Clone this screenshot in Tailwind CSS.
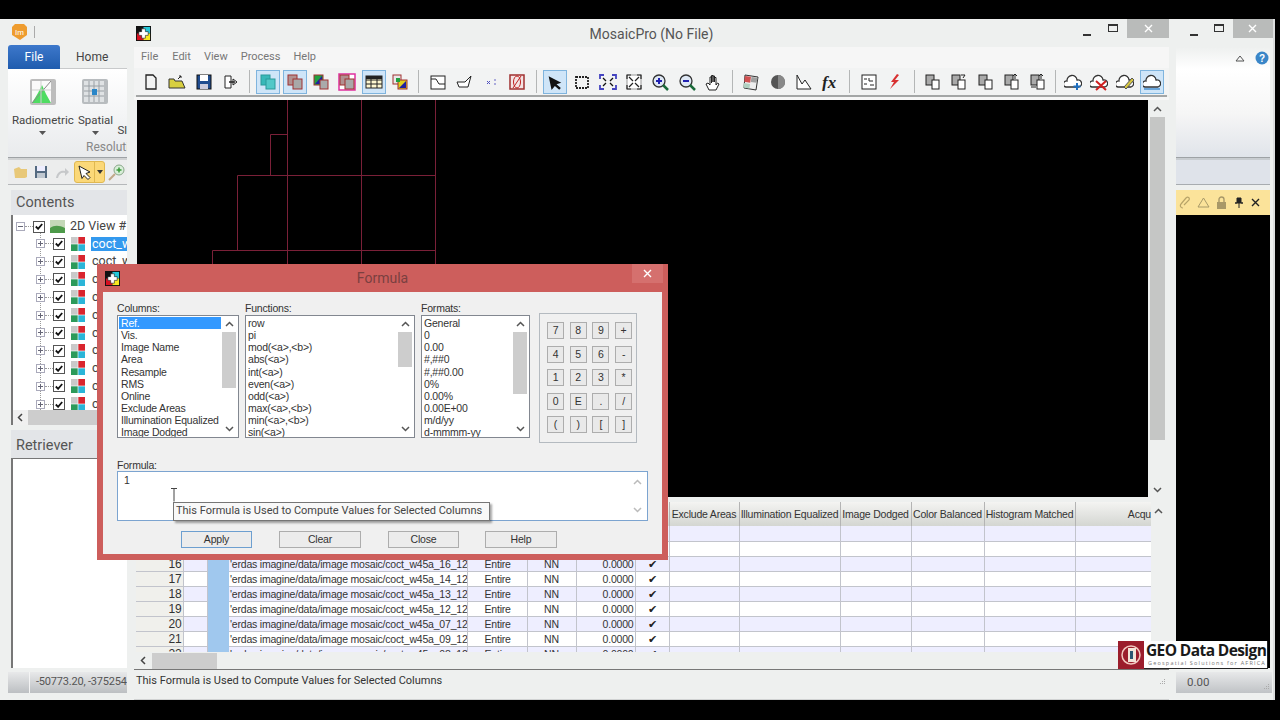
<!DOCTYPE html>
<html lang="en">
<head>
  <meta charset="UTF-8" />
  <title>MosaicPro (No File)</title>
  <script src="https://cdn.jsdelivr.net/npm/@tailwindcss/browser@4"></script>
</head>
<body class="bg-black">
<div class="relative w-[1280px] h-[720px] bg-black overflow-hidden text-[#333] font-['Roboto',sans-serif]">

  <!-- Left app window (IMAGINE main) -->
  <section class="absolute left-0 top-[19px] w-[134px] h-[681px] bg-[#eef0ef] pl-[8px]">
    <div class="w-[119px] h-full flex flex-col overflow-hidden">
      <div class="h-[26px] shrink-0 flex items-center pl-[4px] gap-[7px]">
        <svg class="w-[15px] h-[16px]" viewBox="0 0 15 16"><path d="M3 0h9l3 3v8l-7 5-8-5V3z" fill="#ee9c2f"/><text x="7.5" y="10.5" font-size="8" fill="#fff" text-anchor="middle" font-family="Liberation Sans">Im</text></svg>
        <div class="w-px h-[12px] bg-[#aaa]"></div>
      </div>
      <div class="h-[24px] shrink-0 flex border-b border-[#c8cacb]">
        <div class="w-[52px] h-[24px] rounded-t-[3px] bg-gradient-to-b from-[#3d78cb] to-[#1f5cae] text-white text-[12px] flex items-center justify-center">File</div>
        <div class="flex-1 text-[12px] flex items-end pb-[2px] pl-[16px] text-[#444]">Home</div>
      </div>
      <div class="relative h-[88px] shrink-0 bg-gradient-to-b from-white to-[#e9ebed] flex">
        <div class="w-[70px] flex flex-col items-center pt-[9px]">
          <svg class="w-[28px] h-[28px]" viewBox="0 0 28 28"><rect x="1" y="1" width="26" height="26" rx="2" fill="#bdbdbd"/><rect x="3" y="3" width="19" height="22" fill="#fafafa"/><path d="M3 25 L9 15 L13 7 L17 16 L22 25Z" fill="#4fdc62"/><path d="M3 25L22 3" stroke="#888" fill="none"/><path d="M12 3v22M3 12h19" stroke="#cfcfcf" fill="none"/></svg>
          <span class="text-[11.500px] mt-[6px] leading-[16px] text-[#444]">Radiometric</span>
          <svg class="w-[7px] h-[4px] mt-[3px]" viewBox="0 0 7 4"><path d="M0 0h7L3.500 4z" fill="#555"/></svg>
        </div>
        <div class="w-[36px] flex flex-col items-center pt-[9px]">
          <svg class="w-[28px] h-[28px]" viewBox="0 0 28 28"><rect x="1" y="1" width="26" height="25" rx="2" fill="#b8bcbf"/><path d="M3 3h20v21H3z" fill="#dfe2e4"/><path d="M8 3v21M13 3v21M18 3v21M3 8h20M3 13h20M3 18h20" stroke="#9aa0a5" fill="none"/><rect x="11" y="11" width="5" height="6" fill="#2a86c8"/></svg>
          <span class="text-[11.500px] mt-[6px] leading-[16px] text-[#444]">Spatial</span>
          <svg class="w-[7px] h-[4px] mt-[3px]" viewBox="0 0 7 4"><path d="M0 0h7L3.500 4z" fill="#555"/></svg>
        </div>
        <span class="text-[11.500px] mt-[53px] ml-[4px] leading-[16px] text-[#444] whitespace-nowrap">Sl</span>
        <span class="absolute left-[78px] top-[70px] text-[12px] leading-[16px] text-[#888] whitespace-nowrap">Resolution</span>
      </div>
      <div class="h-[3px] shrink-0 bg-[#d0d2d3] border-t border-[#9ea2a5]"></div>
      <div class="h-[25px] shrink-0 flex items-center bg-[#eceded] border-b border-[#b5b8ba] pl-[5px]">
        <svg class="w-[15px] h-[15px]" viewBox="0 0 15 15"><path d="M1 4l5-2 2 2h6v8l-2 1H2z" fill="#e8c878"/></svg>
        <svg class="w-[14px] h-[14px] ml-[6px]" viewBox="0 0 14 14"><path d="M1 1h12v12H1z" fill="#546a80"/><rect x="3" y="1" width="8" height="5" fill="#eef"/><rect x="3" y="8" width="8" height="5" fill="#c0c8d0"/></svg>
        <svg class="w-[15px] h-[13px] ml-[7px]" viewBox="0 0 15 13"><path d="M1 12C2 6 6 4 10 5V2l4 4-4 4V7C6 6 4 8 3 12z" fill="#c6c8ca"/></svg>
        <div class="w-[31px] h-[22px] ml-[4px] rounded-[3px] border border-[#e0b850] bg-[#fbd878] flex">
          <div class="w-[20px] flex items-center justify-center border-r border-[#e0b850]">
            <svg class="w-[14px] h-[15px]" viewBox="0 0 14 15"><path d="M1 1l11 6-4 1.500 4 4-2 2-4-4-2 3z" fill="#fff" stroke="#222"/></svg>
          </div>
          <div class="flex-1 flex items-center justify-center"><svg class="w-[6px] h-[4px]" viewBox="0 0 6 4"><path d="M0 0h6L3 4z" fill="#333"/></svg></div>
        </div>
        <svg class="w-[17px] h-[17px] ml-[3px]" viewBox="0 0 17 17"><circle cx="11" cy="6" r="5" fill="#d8eed8" stroke="#8aa88a"/><path d="M11 3.500v5M8.500 6h5" stroke="#3a9a3a" stroke-width="1.500"/><path d="M7 10L1 16" stroke="#c0a888" stroke-width="2"/></svg>
      </div>
      <div class="h-[5px] shrink-0"></div>
      <div class="ml-[3px] h-[25px] shrink-0 bg-[#e3e5e8] flex items-center pl-[5px] pt-[1px] text-[14.500px] text-[#555]">Contents</div>
      <div id="tree" class="ml-[3px] h-[195px] shrink-0 bg-white border-l-2 border-[#777] overflow-hidden pt-[3px] relative"></div>
      <div class="ml-[3px] h-[15px] shrink-0 bg-[#f0f0f0] flex items-center pl-[4px] border-l-2 border-[#777]">
        <svg class="w-[6px] h-[9px]" viewBox="0 0 6 9"><path d="M5 1L1.500 4.500 5 8" fill="none" stroke="#444" stroke-width="1.500"/></svg>
        <div class="ml-[5px] w-[80px] h-[15px] bg-[#cdcdcd]"></div>
      </div>
      <div class="h-[5px] shrink-0"></div>
      <div class="ml-[3px] h-[28px] shrink-0 bg-[#e3e5e8] flex items-center pl-[5px] pt-[3px] text-[14.500px] text-[#555]">Retriever</div>
      <div class="ml-[3px] h-[210px] shrink-0 bg-white border-l-2 border-t border-[#777]"></div>
      <div class="h-[4px] shrink-0"></div>
      <div class="h-[21px] shrink-0 bg-gradient-to-b from-[#e8e9ea] to-[#bcbfc2] flex items-center">
        <div class="w-[22px] h-full shrink-0 border-r border-[#f4f4f4]"></div>
        <span class="pl-[6px] text-[11px] tracking-[-0.200px] text-[#555] whitespace-nowrap">-50773.20, -375254</span>
      </div>
    </div>
  </section>

  <!-- MosaicPro window -->
  <section class="absolute left-[134px] top-[19px] w-[1042px] h-[681px] bg-[#eef0ef] flex flex-col">
    <div class="relative h-[28px] shrink-0 flex items-center pl-[2px]">
      <svg class="w-[15px] h-[15px]" viewBox="0 0 16 16"><rect width="16" height="16" fill="#111"/><rect x="8" y="1" width="7" height="7" fill="#22c8d8"/><rect x="1" y="8" width="7" height="7" fill="#d81020"/><rect x="8" y="8" width="7" height="7" fill="#f8e820"/><path d="M6 3h4v3h3v4h-3v3H6v-3H3V6h3z" fill="#fff" stroke="#111" stroke-width=".6"/></svg>
      <div class="absolute left-0 top-[5px] w-[1035px] text-center text-[14px] text-[#555] pointer-events-none">MosaicPro (No File)</div>
      <div class="ml-auto mr-[7px] flex items-start h-full">
        <div class="w-[24px] h-[18px] flex items-end justify-center"><div class="w-[8px] h-[2px] bg-[#333] mb-[1px]"></div></div>
        <div class="w-[28px] h-[18px] flex items-center justify-center"><div class="w-[10px] h-[8px] border border-[#333] border-t-2"></div></div>
        <div class="w-[42px] h-[19px] bg-[#b9bbba] flex items-center justify-center">
          <svg class="w-[9px] h-[9px]" viewBox="0 0 9 9"><path d="M1 1l7 7M8 1L1 8" stroke="#fff" stroke-width="1.400"/></svg>
        </div>
      </div>
    </div>
    <div class="h-[21px] shrink-0 w-[1035px] bg-[#f6f6f6] flex items-center pl-[7px] text-[11px] text-[#777]">
      <span>File</span><span class="ml-[14px]">Edit</span><span class="ml-[13px]">View</span><span class="ml-[13px]">Process</span><span class="ml-[13px]">Help</span>
    </div>
    <div id="toolbar" class="h-[27px] shrink-0 w-[1035px] flex items-center pl-[4px] bg-[#f2f3f3]"></div>
    <div class="h-[2px] shrink-0 ml-[2px] w-[1031px] bg-[#a4a6a6]"></div>
    <div class="h-[3px] shrink-0 w-[1035px] bg-[#f6f6f6]"></div>
    <div class="h-[397px] shrink-0 flex pl-[3px]">
      <svg class="w-[1011px] h-[397px] bg-black" viewBox="0 0 1011 397">
        <path d="M150.500 0V397M224.500 0V397M298.500 0V397M133.500 75.500V34.500H150.500M100.500 150V75.500H298.500M75.500 397V150.500H298.500" fill="none" stroke="#7a2038"/>
      </svg>
      <div class="ml-[2px] w-[15px] flex flex-col">
        <div class="h-[17px] flex items-center justify-center"><svg class="w-[9px] h-[6px]" viewBox="0 0 9 6"><path d="M1 5l3.500-3.500L8 5" fill="none" stroke="#555" stroke-width="1.500"/></svg></div>
        <div class="h-[323px] bg-[#c5c6c5]"></div>
        <div class="flex-1 flex items-end justify-center pb-[4px]"><svg class="w-[9px] h-[6px]" viewBox="0 0 9 6"><path d="M1 1l3.500 3.500L8 1" fill="none" stroke="#555" stroke-width="1.500"/></svg></div>
      </div>
    </div>
    <div class="h-[5px] shrink-0"></div>
    <div class="h-[150px] shrink-0 flex pl-[2px]">
      <div class="w-[1015px] overflow-hidden bg-white">
        <table id="mosaic-table" class="table-fixed border-collapse w-[1015px] text-[10.500px] tracking-[-0.200px] font-['Liberation_Sans',sans-serif] text-[#333]">
          <colgroup>
            <col class="w-[47px]"/><col class="w-[24px]"/><col class="w-[22px]"/><col class="w-[238px]"/><col class="w-[60px]"/><col class="w-[49px]"/><col class="w-[59px]"/><col class="w-[34px]"/><col class="w-[70px]"/><col class="w-[101px]"/><col class="w-[71px]"/><col class="w-[73px]"/><col class="w-[91px]"/><col class="w-[76px]"/>
          </colgroup>
          <thead>
            <tr class="h-[24px] bg-gradient-to-b from-[#f4f4f2] to-[#d4d6d2] font-normal">
              <th class="font-normal pt-[2px] border-r border-[#b4b4b4]">Row</th>
              <th class="font-normal pt-[2px] border-r border-[#b4b4b4]">Vis.</th>
              <th class="font-normal pt-[2px] border-r border-[#b4b4b4]"></th>
              <th class="font-normal pt-[2px] border-r border-[#b4b4b4]">Image Name</th>
              <th class="font-normal pt-[2px] border-r border-[#b4b4b4]">Area</th>
              <th class="font-normal pt-[2px] border-r border-[#b4b4b4]">Resample</th>
              <th class="font-normal pt-[2px] border-r border-[#b4b4b4]">RMS</th>
              <th class="font-normal pt-[2px] border-r border-[#b4b4b4]">Online</th>
              <th class="font-normal pt-[2px] border-r border-[#b4b4b4] whitespace-nowrap overflow-hidden">Exclude Areas</th>
              <th class="font-normal pt-[2px] border-r border-[#b4b4b4] whitespace-nowrap overflow-hidden">Illumination Equalized</th>
              <th class="font-normal pt-[2px] border-r border-[#b4b4b4] whitespace-nowrap overflow-hidden">Image Dodged</th>
              <th class="font-normal pt-[2px] border-r border-[#b4b4b4] whitespace-nowrap overflow-hidden">Color Balanced</th>
              <th class="font-normal pt-[2px] border-r border-[#b4b4b4] whitespace-nowrap overflow-hidden">Histogram Matched</th>
              <th class="font-normal pt-[2px] text-right whitespace-nowrap overflow-hidden pr-0">Acqu</th>
            </tr>
          </thead>
          <tbody id="mosaic-rows"></tbody>
        </table>
      </div>
      <div class="w-[14px] flex justify-center pt-[6px]"><svg class="w-[9px] h-[6px]" viewBox="0 0 9 6"><path d="M1 5l3.500-3.500L8 5" fill="none" stroke="#555" stroke-width="1.500"/></svg></div>
    </div>
    <div class="h-[17px] shrink-0 flex items-center pl-[6px]">
      <svg class="w-[6px] h-[9px]" viewBox="0 0 6 9"><path d="M5 1L1.500 4.500 5 8" fill="none" stroke="#444" stroke-width="1.500"/></svg>
      <div class="ml-[6px] w-[65px] h-[16px] bg-[#cdcdcd]"></div>
    </div>
    <div class="h-px shrink-0 w-[1035px] bg-[#777]"></div>
    <div class="h-[23px] shrink-0 w-[1035px] flex items-center pl-[2px] pr-[3px] text-[11px] text-[#333]">
      <span>This Formula is Used to Compute Values for Selected Columns</span>
      <svg class="ml-auto w-[8px] h-[8px]" viewBox="0 0 8 8"><path d="M6 1h1v1H6zM4 3h1v1H4zM6 3h1v1H6zM2 5h1v1H2zM4 5h1v1H4zM6 5h1v1H6z" fill="#aaa"/></svg>
    </div>
    <div class="mt-auto h-px w-[1035px] bg-[#d0d2d2]"></div>
  </section>

  <!-- Right app window (IMAGINE main, right edge) -->
  <section class="absolute left-[1170px] top-[19px] w-[105px] h-[681px] bg-[#eef0ef] border-r-2 border-[#dcdede] flex flex-col">
    <div class="h-[28px] shrink-0 flex items-start pl-[12px]">
      <div class="w-[24px] h-[18px] flex items-end justify-center"><div class="w-[8px] h-[2px] bg-[#333] mb-[1px]"></div></div>
      <div class="w-[28px] h-[18px] flex items-center justify-center"><div class="w-[10px] h-[8px] border border-[#333] border-t-2"></div></div>
      <div class="w-[41px] h-[19px] bg-[#b9bbba] flex items-center justify-center">
        <svg class="w-[9px] h-[9px]" viewBox="0 0 9 9"><path d="M1 1l7 7M8 1L1 8" stroke="#fff" stroke-width="1.400"/></svg>
      </div>
    </div>
    <div class="ml-[6px] w-[94px] h-[22px] shrink-0 bg-gradient-to-b from-[#eef0ef] to-white flex items-center justify-end pr-[1px] gap-[10px]">
      <svg class="w-[10px] h-[7px]" viewBox="0 0 10 7"><path d="M1 6h8L5 1z" fill="none" stroke="#555"/></svg>
      <svg class="w-[14px] h-[14px]" viewBox="0 0 14 14"><circle cx="7" cy="7" r="6.500" fill="#3a86c8"/><text x="7" y="11" font-size="10" font-weight="700" fill="#fff" text-anchor="middle" font-family="Liberation Sans">?</text></svg>
    </div>
    <div class="ml-[6px] w-[94px] h-[88px] shrink-0 bg-gradient-to-b from-white via-[#f6f6f6] to-[#e0e4ea]"></div>
    <div class="ml-[6px] w-[94px] h-[3px] shrink-0 bg-[#c8ccd0] border-t border-[#9ea2a5]"></div>
    <div class="ml-[6px] w-[94px] h-[25px] shrink-0 bg-[#dfe3ea] border-b border-[#a8acb0]"></div>
    <div class="h-[5px] shrink-0"></div>
    <div class="ml-[6px] w-[94px] h-[25px] shrink-0 bg-[#fbe39a] flex items-center pl-[3px] gap-[6px]">
      <svg class="w-[12px] h-[13px]" viewBox="0 0 12 13"><path d="M4 12c-3 0-3-3-2-4l5-6c2-2 4 0 3 2L5 9" fill="none" stroke="#b8a468" stroke-width="1.200"/></svg>
      <svg class="w-[13px] h-[11px]" viewBox="0 0 13 11"><path d="M6.500 1L12 10H1z" fill="none" stroke="#a89a68"/></svg>
      <svg class="w-[11px] h-[13px]" viewBox="0 0 11 13"><rect x="1" y="6" width="9" height="7" fill="#a89868"/><path d="M3 6V3.500a2.500 2.500 0 0 1 5 0V6" fill="none" stroke="#a89868" stroke-width="1.400"/></svg>
      <svg class="w-[8px] h-[11px] ml-[2px]" viewBox="0 0 8 11"><path d="M2 1h4v5h2H0h2zM4 6v5" fill="#222" stroke="#222"/></svg>
      <svg class="w-[9px] h-[9px] ml-[2px]" viewBox="0 0 9 9"><path d="M1 1l7 7M8 1L1 8" stroke="#222" stroke-width="1.400"/></svg>
    </div>
    <div class="ml-[6px] w-[94px] h-[453px] shrink-0 bg-black"></div>
    <div class="h-[4px] shrink-0"></div>
    <div class="ml-[6px] w-[96px] h-[21px] shrink-0 bg-gradient-to-b from-[#e8e9ea] to-[#c0c3c6] flex items-center pl-[11px] pr-[2px] text-[11.500px] text-[#555]">
      <span>0.00</span>
      <svg class="ml-auto w-[8px] h-[8px] mt-[8px]" viewBox="0 0 8 8"><path d="M6 1h1v1H6zM4 3h1v1H4zM6 3h1v1H6zM2 5h1v1H2zM4 5h1v1H4zM6 5h1v1H6z" fill="#aaa"/></svg>
    </div>
  </section>

  <!-- Formula dialog -->
  <section class="absolute left-[97px] top-[264px] w-[571px] h-[296px] bg-[#cd5e5c] flex flex-col px-[6px] pb-[6px] font-['Liberation_Sans',sans-serif] text-[10.500px] tracking-[-0.200px] text-[#333]">
    <div class="relative h-[28px] shrink-0 flex items-center">
      <svg class="ml-[2px] w-[15px] h-[15px]" viewBox="0 0 16 16"><rect width="16" height="16" fill="#111"/><rect x="8" y="1" width="7" height="7" fill="#22c8d8"/><rect x="1" y="8" width="7" height="7" fill="#d81020"/><rect x="8" y="8" width="7" height="7" fill="#f8e820"/><path d="M6 3h4v3h3v4h-3v3H6v-3H3V6h3z" fill="#fff" stroke="#111" stroke-width=".6"/></svg>
      <div class="absolute left-0 right-0 text-center text-[14px] tracking-normal font-['Roboto',sans-serif] text-[#7a4040]">Formula</div>
      <div class="ml-auto -mr-[1px] w-[31px] h-[19px] self-start bg-[#d5706e] flex items-center justify-center">
        <svg class="w-[9px] h-[9px]" viewBox="0 0 9 9"><path d="M1 1l7 7M8 1L1 8" stroke="#fff" stroke-width="1.400"/></svg>
      </div>
    </div>
    <div class="relative flex-1 bg-[#f0f0f0] pl-[14px] pt-[10px]">
      <div class="flex items-start">
        <div class="w-[122px]">
          <div class="h-[13px] leading-[13px]">Columns:</div>
          <div class="h-[123px] border border-[#828790] bg-white flex">
            <ul class="flex-1 min-w-0 pt-[1px] pl-[1px] overflow-hidden leading-[12.150px] whitespace-nowrap">
              <li class="bg-[#3399ff] text-white pl-[2px] mr-[1px]">Ref.</li>
              <li class="pl-[2px]">Vis.</li>
              <li class="pl-[2px]">Image Name</li>
              <li class="pl-[2px]">Area</li>
              <li class="pl-[2px]">Resample</li>
              <li class="pl-[2px]">RMS</li>
              <li class="pl-[2px]">Online</li>
              <li class="pl-[2px]">Exclude Areas</li>
              <li class="pl-[2px]">Illumination Equalized</li>
              <li class="pl-[2px]">Image Dodged</li>
            </ul>
            <div class="w-[16px] shrink-0 pr-[2px] flex flex-col items-center">
              <div class="h-[16px] flex items-center"><svg class="w-[9px] h-[6px]" viewBox="0 0 9 6"><path d="M1 5l3.500-3.500L8 5" fill="none" stroke="#555" stroke-width="1.500"/></svg></div>
              <div class="w-[14px] h-[56px] bg-[#cdcdcd]"></div>
              <div class="mt-auto h-[16px] flex items-center"><svg class="w-[9px] h-[6px]" viewBox="0 0 9 6"><path d="M1 1l3.500 3.500L8 1" fill="none" stroke="#555" stroke-width="1.500"/></svg></div>
            </div>
          </div>
        </div>
        <div class="w-[170px] ml-[6px]">
          <div class="h-[13px] leading-[13px]">Functions:</div>
          <div class="h-[123px] border border-[#828790] bg-white flex">
            <ul class="flex-1 min-w-0 pt-[1px] pl-[2px] overflow-hidden leading-[12.150px] whitespace-nowrap">
              <li>row</li><li>pi</li><li>mod(&lt;a&gt;,&lt;b&gt;)</li><li>abs(&lt;a&gt;)</li><li>int(&lt;a&gt;)</li><li>even(&lt;a&gt;)</li><li>odd(&lt;a&gt;)</li><li>max(&lt;a&gt;,&lt;b&gt;)</li><li>min(&lt;a&gt;,&lt;b&gt;)</li><li>sin(&lt;a&gt;)</li>
            </ul>
            <div class="w-[16px] shrink-0 pr-[2px] flex flex-col items-center">
              <div class="h-[16px] flex items-center"><svg class="w-[9px] h-[6px]" viewBox="0 0 9 6"><path d="M1 5l3.500-3.500L8 5" fill="none" stroke="#555" stroke-width="1.500"/></svg></div>
              <div class="w-[14px] h-[35px] bg-[#cdcdcd]"></div>
              <div class="mt-auto h-[16px] flex items-center"><svg class="w-[9px] h-[6px]" viewBox="0 0 9 6"><path d="M1 1l3.500 3.500L8 1" fill="none" stroke="#555" stroke-width="1.500"/></svg></div>
            </div>
          </div>
        </div>
        <div class="w-[109px] ml-[6px]">
          <div class="h-[13px] leading-[13px]">Formats:</div>
          <div class="h-[123px] border border-[#828790] bg-white flex">
            <ul class="flex-1 min-w-0 pt-[1px] pl-[2px] overflow-hidden leading-[12.150px] whitespace-nowrap">
              <li>General</li><li>0</li><li>0.00</li><li>#,##0</li><li>#,##0.00</li><li>0%</li><li>0.00%</li><li>0.00E+00</li><li>m/d/yy</li><li>d-mmmm-yy</li>
            </ul>
            <div class="w-[16px] shrink-0 pr-[2px] flex flex-col items-center">
              <div class="h-[16px] flex items-center"><svg class="w-[9px] h-[6px]" viewBox="0 0 9 6"><path d="M1 5l3.500-3.500L8 5" fill="none" stroke="#555" stroke-width="1.500"/></svg></div>
              <div class="w-[14px] h-[62px] bg-[#cdcdcd]"></div>
              <div class="mt-auto h-[16px] flex items-center"><svg class="w-[9px] h-[6px]" viewBox="0 0 9 6"><path d="M1 1l3.500 3.500L8 1" fill="none" stroke="#555" stroke-width="1.500"/></svg></div>
            </div>
          </div>
        </div>
        <div class="ml-[9px] mt-[11px] w-[98px] h-[130px] border border-[#b4bac0] pl-[7px] pt-[8px] grid grid-cols-[17px_17px_17px_17px] auto-rows-[17px] gap-x-[5.700px] gap-y-[6.500px]">
          <button class="border border-[#adadad] bg-[#e9e9e9]">7</button><button class="border border-[#adadad] bg-[#e9e9e9]">8</button><button class="border border-[#adadad] bg-[#e9e9e9]">9</button><button class="border border-[#adadad] bg-[#e9e9e9]">+</button>
          <button class="border border-[#adadad] bg-[#e9e9e9]">4</button><button class="border border-[#adadad] bg-[#e9e9e9]">5</button><button class="border border-[#adadad] bg-[#e9e9e9]">6</button><button class="border border-[#adadad] bg-[#e9e9e9]">-</button>
          <button class="border border-[#adadad] bg-[#e9e9e9]">1</button><button class="border border-[#adadad] bg-[#e9e9e9]">2</button><button class="border border-[#adadad] bg-[#e9e9e9]">3</button><button class="border border-[#adadad] bg-[#e9e9e9]">*</button>
          <button class="border border-[#adadad] bg-[#e9e9e9]">0</button><button class="border border-[#adadad] bg-[#e9e9e9]">E</button><button class="border border-[#adadad] bg-[#e9e9e9]">.</button><button class="border border-[#adadad] bg-[#e9e9e9]">/</button>
          <button class="border border-[#adadad] bg-[#e9e9e9]">(</button><button class="border border-[#adadad] bg-[#e9e9e9]">)</button><button class="border border-[#adadad] bg-[#e9e9e9]">[</button><button class="border border-[#adadad] bg-[#e9e9e9]">]</button>
        </div>
      </div>
      <div class="absolute left-[14px] top-[167px] h-[12px] leading-[12px]">Formula:</div>
      <div class="absolute left-[14px] top-[179px] w-[531px] h-[50px] border border-[#7ca4d0] bg-white flex">
        <div class="flex-1 pl-[6px] leading-[16px]">1</div>
        <div class="w-[20px] flex flex-col items-center justify-between py-[7px]">
          <svg class="w-[9px] h-[6px]" viewBox="0 0 9 6"><path d="M1 5l3.500-3.500L8 5" fill="none" stroke="#bbb" stroke-width="1.500"/></svg>
          <svg class="w-[9px] h-[6px]" viewBox="0 0 9 6"><path d="M1 1l3.500 3.500L8 1" fill="none" stroke="#bbb" stroke-width="1.500"/></svg>
        </div>
      </div>
      <div class="absolute left-[78px] top-[239px] flex text-center leading-[15px]">
        <button class="w-[71px] h-[17px] border border-[#6d9fd0] bg-[#ececec]">Apply</button>
        <button class="w-[82px] h-[17px] ml-[27px] border border-[#adadad] bg-[#ececec]">Clear</button>
        <button class="w-[71px] h-[17px] ml-[27px] border border-[#adadad] bg-[#ececec]">Close</button>
        <button class="w-[72px] h-[17px] ml-[26px] border border-[#adadad] bg-[#ececec]">Help</button>
      </div>
    </div>
    <!-- tooltip and i-beam over the formula box -->
    <div class="absolute left-[76px] top-[238px] w-[317px] h-[19px] bg-[#f8f8f8] border border-[#767676] shadow-[2px_2px_2px_rgba(0,0,0,0.35)] flex items-center pl-[2px] text-[11px] tracking-normal text-[#444] font-['Roboto',sans-serif] whitespace-nowrap">This Formula is Used to Compute Values for Selected Columns</div>
    <svg class="absolute left-[73px] top-[224px] w-[8px] h-[14px]" viewBox="0 0 8 14"><path d="M1 .500h6M4 .500v13" fill="none" stroke="#444"/></svg>
  </section>

  <!-- Watermark -->
  <div class="absolute left-[1118px] top-[641px] w-[150px] h-[28px] bg-white flex font-['Open_Sans',sans-serif]">
    <svg class="w-[26px] h-[28px]" viewBox="0 0 26 28"><rect width="26" height="28" fill="#9b1d2c"/><circle cx="13" cy="14" r="9" fill="none" stroke="#f2c8c0" stroke-width="1.500"/><rect x="10" y="7" width="8" height="14" fill="#f2e4d8"/><rect x="12" y="10" width="3" height="8" fill="#2a5570"/></svg>
    <div class="flex-1 flex flex-col pl-[2px] border-r border-b border-[#222]">
      <span class="text-[15.500px] leading-[18px] font-bold text-[#1a1a1a] whitespace-nowrap tracking-[-0.600px]">GEO Data Design</span>
      <span class="text-[5.500px] leading-[8px] text-[#777] tracking-[1.200px] whitespace-nowrap pl-[2px]">Geospatial Solutions for AFRICA</span>
    </div>
  </div>

  <script>
    // left tree
    const tree = document.getElementById('tree');
    const gridIcon = '<svg class="w-[14px] h-[14px] shrink-0" viewBox="0 0 13 13"><rect width="6.500" height="6.500" fill="#c9c9c9"/><rect x="6.500" width="6.500" height="6.500" fill="#d9252e"/><rect y="6.500" width="6.500" height="6.500" fill="#2c9a5a"/><rect x="6.500" y="6.500" width="6.500" height="6.500" fill="#2ab5d8"/><path d="M6.500 0v13M0 6.500h13" stroke="#fff" stroke-width=".6"/></svg>';
    const check = '<span class="w-[12px] h-[12px] shrink-0 border border-[#555] bg-white flex items-center justify-center"><svg class="w-[8px] h-[7px]" viewBox="0 0 8 7"><path d="M.800 3.500l2.300 2.300L7.200 1" fill="none" stroke="#111" stroke-width="1.800"/></svg></span>';
    const box = s => '<span class="w-[9px] h-[9px] shrink-0 border border-[#aab] bg-white flex items-center justify-center"><svg class="w-[7px] h-[7px]" viewBox="0 0 7 7"><path d="' + s + '" stroke="#667" fill="none"/></svg></span>';

    let html = '<div class="absolute left-[27px] top-[17px] bottom-0 border-l border-dotted border-[#999]"></div>' +
      '<div class="relative h-[17px] flex items-center pl-[3px]">' + box('M1 3.500h5') + '<span class="w-[8px] shrink-0 border-t border-dotted border-[#999]"></span>' + check +
      '<svg class="ml-[5px] w-[15px] h-[13px] shrink-0" viewBox="0 0 15 13"><rect width="15" height="13" fill="#c4d8b8"/><path d="M0 8c4-3 9-3 15 0v5H0z" fill="#4d9a4a"/></svg>' +
      '<span class="ml-[5px] text-[12.500px] whitespace-nowrap text-[#444]">2D View #1</span></div>';
    for (let i = 0; i < 10; i++) {
      const label = i === 0
        ? '<span class="ml-[6px] h-[14px] pl-[1px] pr-[20px] bg-[#3399ee] text-white leading-[14px] whitespace-nowrap text-[12.500px]">coct_w45a</span>'
        : '<span class="ml-[7px] text-[12.500px] whitespace-nowrap text-[#444]">coct_w45a</span>';
      html += '<div class="relative h-[17.800px] flex items-center pl-[23px]">' + box('M1 3.500h5M3.500 1v5') + '<span class="w-[8px] shrink-0 border-t border-dotted border-[#999]"></span>' + check + '<span class="w-[6px] shrink-0"></span>' + gridIcon + label + '</div>';
    }
    tree.innerHTML = html;

    // table rows
    const names = { 14: '20', 15: '18', 16: '16', 17: '14', 18: '13', 19: '12', 20: '07', 21: '09', 22: '08' };
    const rows = document.getElementById('mosaic-rows');
    Object.keys(names).forEach(n => {
      const lav = n % 2 === 0;
      const tint = lav ? 'bg-[#eeeeff]' : 'bg-white';
      const cell = 'p-0 border-r border-b border-[#c2c4cc] ' + tint;
      rows.innerHTML += '<tr class="h-[15px] leading-[14px]">' +
        '<td class="p-0 pr-[1px] text-right text-[12px] border-r border-b border-[#c2c4cc] bg-[#f0f0ec]">' + n + '</td>' +
        '<td class="' + cell + '"></td>' +
        '<td class="p-0 border-b border-[#a0c8ee] bg-[#a0c8ee]"></td>' +
        '<td class="' + cell + ' pl-[1px] whitespace-nowrap overflow-hidden">\'erdas imagine/data/image mosaic/coct_w45a_' + names[n] + '_12</td>' +
        '<td class="' + cell + ' pl-[17px]">Entire</td>' +
        '<td class="' + cell + ' text-center">NN</td>' +
        '<td class="' + cell + ' text-right pr-[1px]">0.0000</td>' +
        '<td class="' + cell + ' text-center text-[#222]">&#10004;</td>' +
        '<td class="' + cell + '"></td><td class="' + cell + '"></td><td class="' + cell + '"></td><td class="' + cell + '"></td><td class="' + cell + '"></td><td class="' + cell + '"></td></tr>';
    });

    // main toolbar: each entry is the inner svg of an 18x18 icon, '|' is a separator
    const dk = 'fill="none" stroke="#222"';
    const stack = (a, b, c, d) => '<rect x="2" y="2" width="9" height="10" fill="' + a + '" stroke="' + c + '"/><rect x="7" y="6" width="9" height="10" fill="' + b + '" stroke="' + d + '"/>';
    const dup = extra => '<rect x="2" y="2" width="8" height="10" fill="#aaa" stroke="#222"/><rect x="8" y="7" width="7" height="9" fill="#fff" stroke="#222"/>' + extra;
    const cloud = '<path d="M2 14a3 3 0 0 1 1-6 5 5 0 0 1 10-1 3.500 3.500 0 0 1 2 7z" fill="#fff" stroke="#333" stroke-width="1.300"/>';
    const icons = [
      ['<path d="M4 2h7l3 3v11H4z" ' + dk + ' stroke-width="1.300"/>'],
      ['<path d="M1 15V6h5l1 2h7l3 7z" fill="#d8cf40" stroke="#333"/><path d="M10 6l3-3m0 0h-2m2 0v2" ' + dk + '/>'],
      ['<rect x="2" y="2" width="14" height="14" fill="#1f4c8f" stroke="#111"/><rect x="5" y="2" width="8" height="6" fill="#fff"/><rect x="5" y="11" width="8" height="5" fill="#ccd"/>'],
      ['<path d="M4 3h6v12H4zM12 6v6l4-3z" fill="#fff" stroke="#222"/><path d="M8 9h6" ' + dk + ' stroke-width="1.500"/>'],
      '|',
      [stack('#38b8b8', '#52c8c8', '#2a9a9a', '#2a9a9a'), 1],
      [stack('#b09090', '#a8a8a8', '#a03030', '#a03030'), 1],
      ['<rect x="2" y="2" width="9" height="10" fill="#20a040" stroke="#a03030"/><path d="M3 11l7-8v8z" fill="#2020a0"/><rect x="8" y="7" width="8" height="9" fill="#aaa" stroke="#a03030"/>'],
      ['<rect x="1" y="1" width="16" height="16" fill="#fff" stroke="#e030a0" stroke-width="1.500"/>' + stack('#b09090', '#a8a8a8', '#a03030', '#a03030')],
      ['<rect x="1" y="3" width="16" height="12" fill="#fff8d0" stroke="#222"/><path d="M1 7h16M1 11h16M6 3v12M12 3v12" ' + dk + '/><rect x="1" y="3" width="16" height="3" fill="#222"/>', 1],
      ['<rect x="2" y="2" width="8" height="9" fill="#e8e8e8" stroke="#a03030"/><rect x="7" y="7" width="9" height="9" fill="#e0d020" stroke="#a03030"/><path d="M8 15l7-7v7z" fill="#2020a0"/><rect x="5" y="5" width="4" height="4" fill="#20a040"/>'],
      '|',
      ['<rect x="2" y="3" width="14" height="13" fill="#fff" stroke="#222"/><path d="M2 6h5l3 5h6" ' + dk + '/>'],
      ['<path d="M2 9l2 5h9l3-11-6 6z" fill="#fff" stroke="#222"/>'],
      ['<path d="M5 8l3 3M8 8l-3 3" stroke="#5050c0" fill="none"/><circle cx="13" cy="7" r=".8" fill="#5050c0"/><circle cx="13" cy="11" r=".8" fill="#5050c0"/>'],
      ['<rect x="2" y="2" width="14" height="14" fill="#f4e4e4" stroke="#a03030" stroke-width="1.500"/><ellipse cx="9" cy="9" rx="3.500" ry="6" fill="none" stroke="#c02020"/><path d="M5 15L13 3" stroke="#c02020"/>'],
      '|',
      ['<path d="M4 2l11 9-5 .5 3.500 4.500-2 1.500L8 13l-4 3z" fill="#111" transform="rotate(-12 9 9)"/>', 1],
      ['<rect x="3" y="4" width="12" height="11" fill="none" stroke="#222" stroke-width="1.800" stroke-dasharray="2 1"/>'],
      ['<path d="M1 6V2h4M13 2h4v4M1 12v4h4M17 12v4h-4" fill="none" stroke="#4444c0" stroke-width="1.800"/><path d="M4 5l3 3M14 5l-3 3M4 13l3-3M14 13l-3-3" stroke="#111" stroke-width="1.300" fill="none"/>'],
      ['<path d="M2 2h14v14H2z" fill="#fff" stroke="#999"/><path d="M2 6V2h4M12 2h4v4M2 12v4h4M16 12v4h-4M4 4l4 4M14 4l-4 4M4 14l4-4M14 14l-4-4" fill="none" stroke="#222" stroke-width="1.200"/>'],
      ['<circle cx="8" cy="8" r="6" fill="#dfe8f5" stroke="#333" stroke-width="1.300"/><path d="M5 8h6M8 5v6" stroke="#2020b0" stroke-width="2"/><path d="M12 12l5 5" stroke="#1a6a3a" stroke-width="2.500"/>'],
      ['<circle cx="8" cy="8" r="6" fill="#dfe8f5" stroke="#333" stroke-width="1.300"/><path d="M5 8h6" stroke="#2020b0" stroke-width="2"/><path d="M12 12l5 5" stroke="#1a6a3a" stroke-width="2.500"/>'],
      ['<path d="M5 17l-3-6 2-1 2 2V4h1.500v6V2.500H9V9 3h1.500v6V4.500H12V12l1.500-2 1.500 1-3 6z" fill="#fff" stroke="#222"/>'],
      '|',
      ['<path d="M3 2l13 2-2 13-12-2z" fill="#eee" stroke="#333"/><path d="M3 3l6 .8-.8 6-6-1z" fill="#d05050"/><path d="M9.500 4l6 .8-.8 5-6-.8z" fill="#a0a0a0"/><path d="M2 10l6 1-.6 4.500-6-1z" fill="#b0d0c0"/>'],
      ['<circle cx="9" cy="9" r="7" fill="#555"/><path d="M9 2a7 7 0 0 1 0 14" fill="#888"/>'],
      ['<path d="M2 2v14h14L10 7l-3 4z" fill="#fff" stroke="#222"/>'],
      ['<text x="1" y="15" font-size="17" font-style="italic" font-weight="700" fill="#222" font-family="Liberation Serif">fx</text>'],
      '|',
      ['<rect x="2" y="2" width="14" height="14" fill="#fff" stroke="#222"/><path d="M4 6h3M9 5v3h4M4 11h3m3 1h4" fill="none" stroke="#222"/>'],
      ['<path d="M11 1L5 9h3l-4 7 9-9H9l4-5z" fill="#d83030"/>'],
      '|',
      [dup('')],
      [dup('<path d="M11 2h4M13 5l2-3" ' + dk + '/>')],
      [dup('')],
      [dup('<path d="M12 1v5M10 3l2-2 2 2" ' + dk + '/>')],
      [dup('<path d="M12 1v5M10 3l2-2 2 2M2 14h5" ' + dk + '/>')],
      '||',
      [cloud + '<path d="M13 10v7M9.500 13.500h7" stroke="#1f6fc0" stroke-width="2"/>'],
      [cloud + '<path d="M6 8l10 9M16 8L6 17" stroke="#d02020" stroke-width="2"/>'],
      [cloud + '<path d="M8 14l8-9 2 2-8 9z" fill="#d8c840" stroke="#555"/>'],
      [cloud + '<path d="M1 16h16" stroke="#4a90d0" stroke-width="1.500"/>', 1]
    ];
    const bar = document.getElementById('toolbar');
    icons.forEach(ic => {
      if (ic === '|' || ic === '||') {
        const w = ic === '|' ? 'w-[12px]' : 'w-[8px]';
        bar.insertAdjacentHTML('beforeend', '<div class="' + w + ' h-[24px] shrink-0 flex items-center justify-center"><div class="w-px h-[23px] bg-[#b4b6b6]"></div></div>');
        return;
      }
      const frame = ic[1] ? 'bg-[#cfe5f8] border border-[#7fb4de]' : '';
      bar.insertAdjacentHTML('beforeend', '<div class="w-[26.300px] h-[26px] shrink-0 flex items-center justify-center"><div class="w-[24px] h-[24px] flex items-center justify-center ' + frame + '"><svg class="w-[18px] h-[18px]" viewBox="0 0 18 18">' + ic[0] + '</svg></div></div>');
    });
  </script>
</div>
</body>
</html>
